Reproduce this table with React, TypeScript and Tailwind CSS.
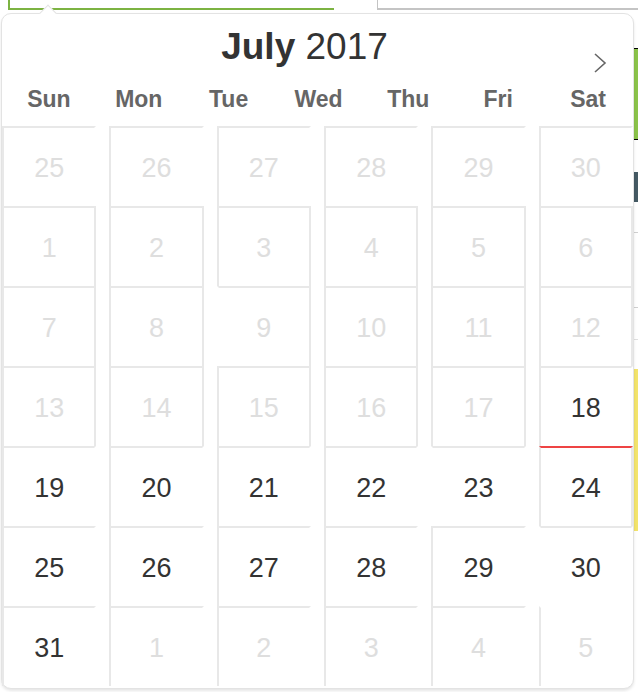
import React from "react";

type Cell = { d: number; muted?: boolean; sides: string; today?: boolean };

const rows: Cell[][] = [
  [
    { d: 25, muted: true, sides: "tl" },
    { d: 26, muted: true, sides: "tl" },
    { d: 27, muted: true, sides: "tl" },
    { d: 28, muted: true, sides: "tl" },
    { d: 29, muted: true, sides: "tl" },
    { d: 30, muted: true, sides: "tl" },
  ],
  [
    { d: 1, muted: true, sides: "tlr" },
    { d: 2, muted: true, sides: "tlr" },
    { d: 3, muted: true, sides: "tlr" },
    { d: 4, muted: true, sides: "tlr" },
    { d: 5, muted: true, sides: "tlr" },
    { d: 6, muted: true, sides: "tlr" },
  ],
  [
    { d: 7, muted: true, sides: "tlr" },
    { d: 8, muted: true, sides: "tlr" },
    { d: 9, muted: true, sides: "tr" },
    { d: 10, muted: true, sides: "tlr" },
    { d: 11, muted: true, sides: "tlr" },
    { d: 12, muted: true, sides: "tlr" },
  ],
  [
    { d: 13, muted: true, sides: "tlr" },
    { d: 14, muted: true, sides: "tlr" },
    { d: 15, muted: true, sides: "tlr" },
    { d: 16, muted: true, sides: "tlr" },
    { d: 17, muted: true, sides: "tlr" },
    { d: 18, sides: "tl", today: true },
  ],
  [
    { d: 19, sides: "tl" },
    { d: 20, sides: "tl" },
    { d: 21, sides: "tl" },
    { d: 22, sides: "tl" },
    { d: 23, sides: "t" },
    { d: 24, sides: "lr" },
  ],
  [
    { d: 25, sides: "tl" },
    { d: 26, sides: "tl" },
    { d: 27, sides: "tl" },
    { d: 28, sides: "tl" },
    { d: 29, sides: "tl" },
    { d: 30, sides: "t" },
  ],
  [
    { d: 31, sides: "tl" },
    { d: 1, muted: true, sides: "tl" },
    { d: 2, muted: true, sides: "tl" },
    { d: 3, muted: true, sides: "tl" },
    { d: 4, muted: true, sides: "tl" },
    { d: 5, muted: true, sides: "l" },
  ],
];

const weekdays = ["Sun", "Mon", "Tue", "Wed", "Thu", "Fri", "Sat"];

function DayCell({ cell }: { cell: Cell }) {
  const t = cell.sides.includes("t") ? "border-t-2" : "border-t-2 border-t-transparent";
  const l = cell.sides.includes("l") ? "border-l-2" : "border-l-2 border-l-transparent";
  const r = cell.sides.includes("r") ? "border-r-2" : "border-r-2 border-r-transparent";
  return (
    <div className={`relative h-[80px] pt-[3px] border-[#e8e8e8] ${t} ${l} ${r} flex items-center justify-center`}>
      <span className={`text-[27px] ${cell.muted ? "text-[#dedede]" : "text-[#333]"}`}>{cell.d}</span>
      {cell.today && <div className="absolute left-[-2px] right-[-2px] bottom-[-2px] h-[2px] bg-[#ee4444]" />}
    </div>
  );
}

export default function App() {
  return (
    <div className="relative w-[638px] h-[692px] bg-white overflow-hidden font-['Liberation_Sans',Arial,sans-serif]">
      {/* page behind the popup */}
      <div className="flex h-[10px]">
        <div className="ml-[8px] w-[326px] border-l-2 border-b-2 border-[#7cb342]" />
        <div className="ml-[43px] flex-1 border-l border-b-2 border-[#c4c4c4]" />
      </div>
      <div className="flex justify-end">
        <div className="w-[4px] flex flex-col">
          <div className="mt-[38px] h-[92px] bg-[#8bc34a] border-y border-black" />
          <div className="mt-[32px] h-[30px] bg-[#455a64]" />
          <div className="mt-[30px] h-[1px] bg-[#d0d0d0]" />
          <div className="mt-[74px] h-[1px] bg-[#d0d0d0]" />
          <div className="mt-[31px] h-[1px] bg-[#e0e0e0]" />
          <div className="mt-[29px] h-[162px] bg-[#f3e46c]" />
        </div>
      </div>

      {/* popup */}
      <div className="absolute left-[1px] top-[13px] w-[633px] h-[676px] bg-white border border-[#e3e3e3] rounded-[10px] shadow-[0_2px_3px_rgba(0,0,0,0.10)]">
        <div className="absolute left-[40px] top-[-7px] w-[12px] h-[12px] rotate-45 bg-white border-l border-t border-[#e3e3e3]" />
        <div className="relative h-[65px] pr-[26px] flex items-center justify-center text-[37px] text-[#333]">
          <span>
            <span className="font-bold">July</span> 2017
          </span>
          <svg className="absolute right-[26px] top-[38px]" width="14" height="22" viewBox="0 0 14 22">
            <polyline points="2,2 12,11 2,20" fill="none" stroke="#666" strokeWidth="1.6" />
          </svg>
        </div>
        <div className="grid grid-cols-7 h-[40px] items-center pl-[2px]">
          {weekdays.map((w) => (
            <div key={w} className="text-center text-[23px] font-bold text-[#666]">
              {w}
            </div>
          ))}
        </div>
        <div className="mt-[7px] grid grid-cols-6 gap-x-[13px]">
          {rows.flat().map((c, i) => (
            <DayCell key={i} cell={c} />
          ))}
        </div>
      </div>
    </div>
  );
}
